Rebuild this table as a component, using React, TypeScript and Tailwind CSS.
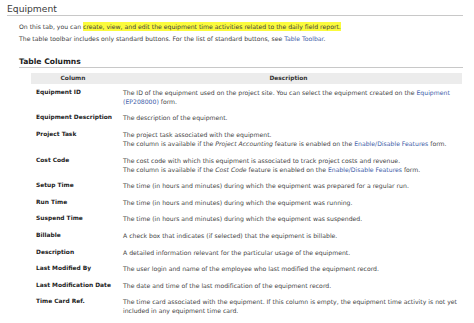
import React from 'react';

type Row = { name: string; desc: React.ReactNode };

const Link = ({ children }: { children: React.ReactNode }) => (
    <span className="text-[#3d5da8]">{children}</span>
);

const rows: Row[] = [
    {
        name: 'Equipment ID',
        desc: (
            <>
                The ID of the equipment used on the project site. You can select the equipment created on the <Link>Equipment</Link>
                <br />
                <Link>(EP208000)</Link> form.
            </>
        ),
    },
    { name: 'Equipment Description', desc: 'The description of the equipment.' },
    {
        name: 'Project Task',
        desc: (
            <>
                The project task associated with the equipment.
                <br />
                The column is available if the <i>Project Accounting</i> feature is enabled on the <Link>Enable/Disable Features</Link> form.
            </>
        ),
    },
    {
        name: 'Cost Code',
        desc: (
            <>
                The cost code with which this equipment is associated to track project costs and revenue.
                <br />
                The column is available if the <i>Cost Code</i> feature is enabled on the <Link>Enable/Disable Features</Link> form.
            </>
        ),
    },
    { name: 'Setup Time', desc: 'The time (in hours and minutes) during which the equipment was prepared for a regular run.' },
    { name: 'Run Time', desc: 'The time (in hours and minutes) during which the equipment was running.' },
    { name: 'Suspend Time', desc: 'The time (in hours and minutes) during which the equipment was suspended.' },
    { name: 'Billable', desc: 'A check box that indicates (if selected) that the equipment is billable.' },
    { name: 'Description', desc: 'A detailed information relevant for the particular usage of the equipment.' },
    { name: 'Last Modified By', desc: 'The user login and name of the employee who last modified the equipment record.' },
    { name: 'Last Modification Date', desc: 'The date and time of the last modification of the equipment record.' },
    {
        name: 'Time Card Ref.',
        desc: (
            <>
                The time card associated with the equipment. If this column is empty, the equipment time activity is not yet
                <br />
                included in any equipment time card.
            </>
        ),
    },
];

export default function App() {
    return (
        <div className="w-[474px] h-[323px] overflow-hidden bg-white text-[#333] font-['DejaVu_Sans',Verdana,sans-serif]">
            {/* Page title */}
            <div className="ml-[7px] mr-[11px] pt-[3px] border-b border-[#c8c8c8]">
                <h1 className="text-[9.2px] leading-[12px] text-[#3a3a3a]">Equipment</h1>
            </div>

            <div className="ml-[19px] mr-[11px]">
                <p className="mt-[5px] text-[6.15px] leading-[11.5px] text-[#3c3c3c]">
                    On this tab, you can <span className="bg-[#fbfb3c] py-[1px]">create, view, and edit the equipment time activities related to the daily field report.</span>
                </p>
                <p className="text-[6.15px] leading-[11.5px] text-[#3c3c3c]">
                    The table toolbar includes only standard buttons. For the list of standard buttons, see <Link>Table Toolbar</Link>.
                </p>

                {/* Section heading */}
                <h2 className="mt-[13px] text-[7.6px] leading-[10px] font-bold text-[#222] border-b border-[#c8c8c8]">
                    Table Columns
                </h2>

                <table className="ml-[12px] mt-[5px] w-[431px] border-collapse text-[6.15px] leading-[9px]">
                    <thead>
                        <tr className="bg-[#ececec]">
                            <th className="w-[84px] py-[1px] font-bold text-[#333] text-[5.9px]">Column</th>
                            <th className="py-[1px] font-bold text-[#333] text-[5.9px]">Description</th>
                        </tr>
                    </thead>
                    <tbody>
                        {rows.map(r => (
                            <tr key={r.name}>
                                <td className="align-top pl-[5px] py-[3.8px] font-bold text-[#222] text-[5.9px] whitespace-nowrap">{r.name}</td>
                                <td className="align-top pl-[8px] py-[3.8px] text-[#444]">{r.desc}</td>
                            </tr>
                        ))}
                    </tbody>
                </table>
            </div>
        </div>
    );
}
